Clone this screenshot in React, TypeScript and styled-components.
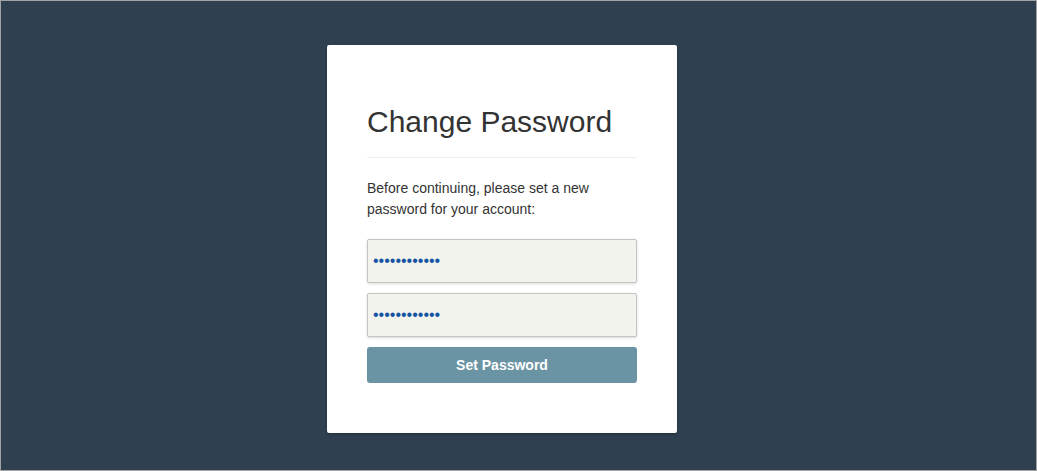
import React from 'react';
import styled, { createGlobalStyle } from 'styled-components';

const GlobalStyle = createGlobalStyle`
  html, body {
    margin: 0;
    padding: 0;
  }
  body {
    font-family: "Liberation Sans", Arial, sans-serif;
    color: #333;
  }
  * {
    box-sizing: border-box;
  }
`;

const Page = styled.div`
  width: 1037px;
  height: 471px;
  background-color: #2f4050;
  border: 1px solid #a3a3a3;
  padding: 44px 0 0 326px;
`;

const Card = styled.div`
  width: 350px;
  height: 388px;
  background-color: #fff;
  border-radius: 2px;
  box-shadow: 0 1px 3px rgba(0, 0, 0, 0.3);
  padding: 57px 40px 0;
`;

const Title = styled.h1`
  margin: 0;
  font-size: 30px;
  font-weight: 400;
  line-height: 40px;
  color: #333;
`;

const Divider = styled.hr`
  margin: 15px 0 20px;
  border: 0;
  border-top: 1px solid #eee;
`;

const Intro = styled.p`
  margin: 0 0 19px;
  font-size: 14px;
  line-height: 21px;
  color: #333;
`;

const Form = styled.form`
  display: flex;
  flex-direction: column;
  gap: 10px;
`;

const PasswordInput = styled.input`
  width: 100%;
  height: 44px;
  padding: 0 5px;
  background-color: #f3f3ee;
  border: 1px solid #c4c4c4;
  border-radius: 2px;
  box-shadow: 0 1px 3px rgba(0, 0, 0, 0.15);
  color: #1553a3;
  font-family: "Liberation Sans", Arial, sans-serif;
  font-size: 16px;
  outline: none;
`;

const SubmitButton = styled.button`
  width: 100%;
  height: 36px;
  border: 0;
  border-radius: 3px;
  background-color: #6a93a3;
  color: #fff;
  font-family: "Liberation Sans", Arial, sans-serif;
  font-size: 14px;
  font-weight: 700;
  cursor: pointer;
`;

export default function App(): JSX.Element {
  return (
    <>
      <GlobalStyle />
      <Page>
        <Card>
          <Title>Change Password</Title>
          <Divider />
          <Intro>Before continuing, please set a new password for your account:</Intro>
          <Form onSubmit={e => e.preventDefault()}>
            <PasswordInput type="password" defaultValue="newpassword1" />
            <PasswordInput type="password" defaultValue="newpassword1" />
            <SubmitButton type="submit">Set Password</SubmitButton>
          </Form>
        </Card>
      </Page>
    </>
  );
}
